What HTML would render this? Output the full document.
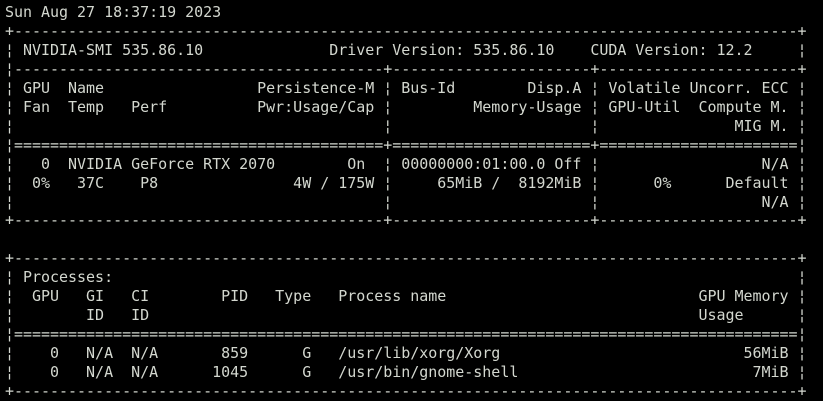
<!DOCTYPE html>
<html><head><meta charset="utf-8"><style>
html,body{margin:0;padding:0;background:#000;width:823px;height:401px;overflow:hidden}
pre{margin:0;padding:3px 0 0 5px;color:#d3d7cf;font-family:"DejaVu Sans Mono","Liberation Mono",monospace;font-size:15px;line-height:18.95px;letter-spacing:-0.025px}
</style></head><body><pre>Sun Aug 27 18:37:19 2023
+---------------------------------------------------------------------------------------+
¦ NVIDIA-SMI 535.86.10              Driver Version: 535.86.10    CUDA Version: 12.2     ¦
¦-----------------------------------------+----------------------+----------------------+
¦ GPU  Name                 Persistence-M ¦ Bus-Id        Disp.A ¦ Volatile Uncorr. ECC ¦
¦ Fan  Temp   Perf          Pwr:Usage/Cap ¦         Memory-Usage ¦ GPU-Util  Compute M. ¦
¦                                         ¦                      ¦               MIG M. ¦
¦=========================================+======================+======================¦
¦   0  NVIDIA GeForce RTX 2070        On  ¦ 00000000:01:00.0 Off ¦                  N/A ¦
¦  0%   37C    P8               4W / 175W ¦     65MiB /  8192MiB ¦      0%      Default ¦
¦                                         ¦                      ¦                  N/A ¦
+-----------------------------------------+----------------------+----------------------+
                                                                                         
+---------------------------------------------------------------------------------------+
¦ Processes:                                                                            ¦
¦  GPU   GI   CI        PID   Type   Process name                            GPU Memory ¦
¦        ID   ID                                                             Usage      ¦
¦=======================================================================================¦
¦    0   N/A  N/A       859      G   /usr/lib/xorg/Xorg                           56MiB ¦
¦    0   N/A  N/A      1045      G   /usr/bin/gnome-shell                          7MiB ¦
+---------------------------------------------------------------------------------------+</pre></body></html>
